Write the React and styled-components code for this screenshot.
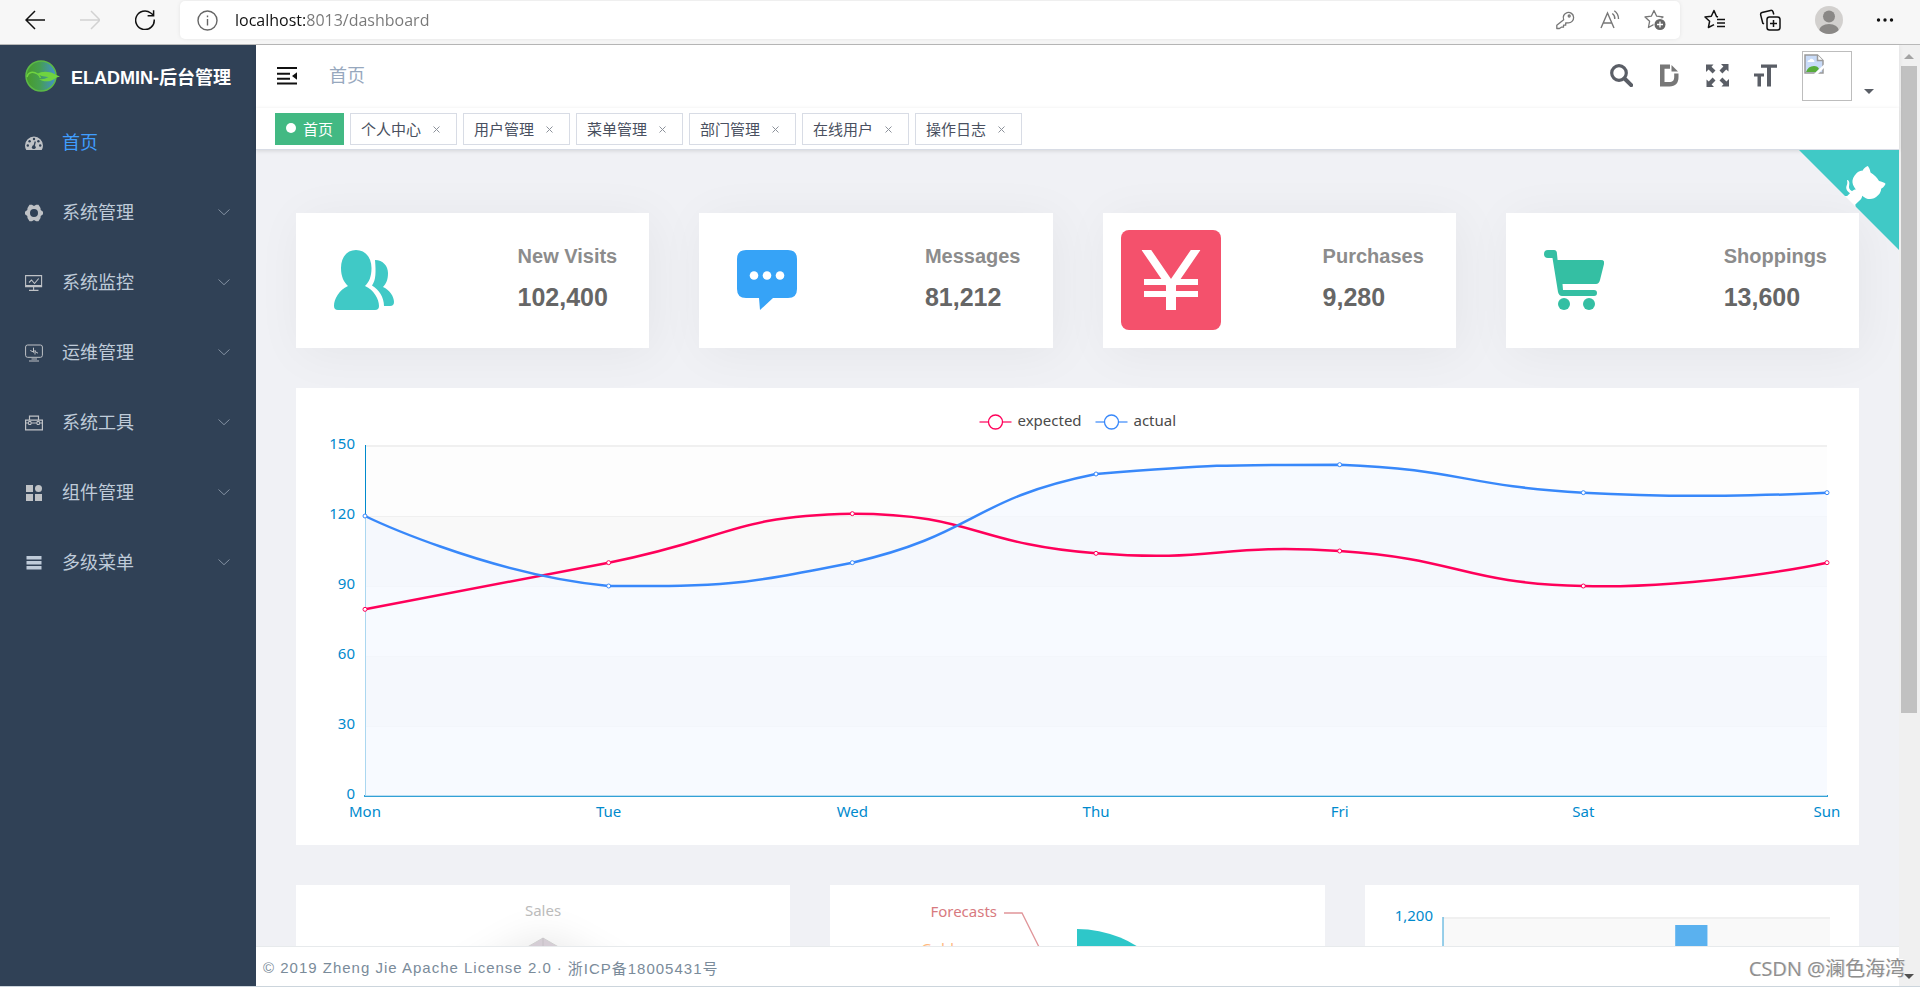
import React, { useLayoutEffect, useRef, useState } from 'react';
import styled, { createGlobalStyle } from 'styled-components';

const SANS = '"Liberation Sans", "Noto Sans CJK SC", sans-serif';
const CHART = '"Noto Sans", "Noto Sans CJK SC", sans-serif';

const Global = createGlobalStyle`
  *, *::before, *::after { box-sizing: border-box; }
  body { margin: 0; font-family: ${SANS}; overflow: hidden; }
  button { border: 0; background: none; padding: 0; margin: 0; font: inherit; color: inherit; cursor: pointer; }
  a { color: inherit; text-decoration: none; }
  svg { display: block; flex: none; }
  ul, p { margin: 0; padding: 0; list-style: none; }
`;

/* ---------- page frame ---------- */

const Page = styled.div`
  height: 100vh;
  display: flex;
  flex-direction: column;
  position: relative;
  border-bottom: 1px solid #ccd5dc;
`;

const Body = styled.div`
  flex: 1;
  min-height: 0;
  display: flex;
`;

const Column = styled.div`
  flex: 1;
  min-width: 0;
  display: flex;
  flex-direction: column;
  background: #f0f1f5;
`;

/* ---------- browser bar ---------- */

const BrowserBar = styled.header`
  height: 45px;
  flex: none;
  display: flex;
  align-items: flex-start;
  background: #f7f7f7;
  border-bottom: 1px solid #b9b9b9;
`;

const NavButtons = styled.div`
  width: 180px;
  height: 40px;
  padding-left: 25px;
  display: flex;
  align-items: center;
  gap: 35px;
`;

const AddressBar = styled.div`
  flex: 1;
  height: 38px;
  margin-top: 1px;
  padding: 0 14px 0 17px;
  display: flex;
  align-items: center;
  background: #fff;
  border-radius: 5px;
  box-shadow: 0 0 4px rgba(0, 0, 0, 0.08);
`;

const AddressInput = styled.input`
  flex: 1;
  min-width: 0;
  height: 30px;
  margin-left: 17px;
  padding: 0;
  border: 0;
  outline: 0;
  font: 16px "Open Sans", sans-serif;
  color: transparent;
  background: linear-gradient(to right, #111 70px, #777 70px);
  -webkit-background-clip: text;
  background-clip: text;
`;

const AddressActions = styled.div`
  display: flex;
  gap: 23px;
`;

const BrowserActions = styled.div`
  width: 240px;
  height: 40px;
  padding: 0 26px 0 24px;
  display: flex;
  align-items: center;
  justify-content: space-between;
`;

/* ---------- sidebar ---------- */

const Sidebar = styled.nav`
  width: 256px;
  flex: none;
  background: #304156;
`;

const Logo = styled.a`
  height: 63px;
  padding-bottom: 2px;
  display: flex;
  align-items: center;
  justify-content: center;
  gap: 10px;
  font-size: 18px;
  font-weight: 700;
  color: #fff;
`;

const MenuItem = styled.button`
  width: 100%;
  height: 70px;
  padding: 0 26px 0 25px;
  display: flex;
  align-items: center;
  text-align: left;
  font-size: 18px;
  line-height: 24px;
  color: ${(p) => (p.$active ? '#409eff' : '#bfcbd9')};
`;

const MenuLabel = styled.span`
  flex: 1;
  margin-left: 19px;
`;

/* ---------- top navigation ---------- */

const Navbar = styled.div`
  height: 63px;
  flex: none;
  padding: 0 25px 2px 19px;
  display: flex;
  align-items: center;
  background: #fff;
  box-shadow: 0 1px 5px rgba(0, 21, 41, 0.08);
  position: relative;
`;

const Crumb = styled.a`
  flex: 1;
  margin-left: 30px;
  font-size: 18px;
  line-height: 24px;
  color: #97a8be;
`;

const NavTools = styled.div`
  display: flex;
  align-items: center;
  gap: 25px;
  color: #5a5e66;
`;

const UserMenu = styled.button`
  display: flex;
  align-items: flex-end;
  gap: 12px;
  padding-top: 1px;
`;

const Avatar = styled.span`
  width: 50px;
  height: 50px;
  padding: 2px 0 0 1px;
  border: 1px solid #bdbdbd;
`;

const Caret = styled.span`
  margin-bottom: 7px;
  border: 5px solid transparent;
  border-top-color: #5a5e66;
  border-bottom: 0;
`;

const Tags = styled.div`
  height: 42px;
  flex: none;
  padding: 5px 19px 0;
  display: flex;
  gap: 6px;
  background: #fff;
  border-bottom: 1px solid #d8dce5;
  box-shadow: 0 1px 4px rgba(0, 0, 0, 0.12);
  position: relative;
`;

const Tag = styled.div`
  height: 32px;
  padding: 0 10px 2px;
  display: flex;
  align-items: center;
  gap: ${(p) => (p.$active ? 7 : 5)}px;
  font-size: 15px;
  color: ${(p) => (p.$active ? '#fff' : '#495060')};
  background: ${(p) => (p.$active ? '#42b983' : '#fff')};
  border: 1px solid ${(p) => (p.$active ? '#42b983' : '#d8dce5')};
`;

const Dot = styled.span`
  width: 10px;
  height: 10px;
  border-radius: 50%;
  background: #fff;
`;

const CloseButton = styled.button`
  width: 20px;
  height: 20px;
  padding-top: 2px;
  display: grid;
  place-items: center;
  color: #8d929b;
`;

/* ---------- dashboard ---------- */

const Dashboard = styled.main`
  flex: 1;
  min-height: 0;
  overflow: hidden;
  position: relative;
  padding: 63px 40px 0;
`;

const Corner = styled.a`
  position: absolute;
  top: 0;
  right: 0;
  color: #fff;
`;

const StatGrid = styled.div`
  display: grid;
  grid-template-columns: repeat(4, 1fr);
  gap: 50px;
  margin-bottom: 40px;
`;

const StatCard = styled.section`
  height: 135px;
  display: flex;
  justify-content: space-between;
  background: #fff;
  box-shadow: 5px 5px 50px rgba(0, 0, 0, 0.05);
`;

const StatIcon = styled.span`
  width: 100px;
  height: 100px;
  margin: 17px 0 0 18px;
  padding: 20px;
  border-radius: 8px;
  color: ${(p) => (p.$filled ? '#fff' : p.$color)};
  background: ${(p) => (p.$filled ? p.$color : 'transparent')};
`;

const StatText = styled.div`
  margin: 32px 32px 0 0;
  font-weight: 700;
`;

const StatLabel = styled.p`
  margin-bottom: 15px;
  font-size: 20px;
  line-height: 22px;
  color: #8c8c8c;
`;

const StatValue = styled.p`
  font-size: 25px;
  line-height: 30px;
  color: #666;
`;

const ChartPanel = styled.section`
  height: ${(p) => p.$height}px;
  margin-bottom: 40px;
  background: #fff;

  svg { width: 100%; height: 100%; font: 15px ${CHART}; }
`;

const ChartGrid = styled.div`
  display: grid;
  grid-template-columns: repeat(3, 1fr);
  gap: 40px;
`;

const Footer = styled.footer`
  height: 40px;
  flex: none;
  padding: 2px 7px 0;
  display: flex;
  align-items: center;
  gap: 5px;
  background: #fff;
  border-top: 1px solid #e7eaec;
  font-size: 15px;
  letter-spacing: 1px;
  color: #7a8b9a;
  position: relative;
`;

const ScrollTrack = styled.div`
  width: 21px;
  flex: none;
  padding: 0 3px 0 2px;
  display: flex;
  flex-direction: column;
  align-items: center;
  background: #f0f0f0;
`;

const ScrollArrow = styled.button`
  height: 21px;
  display: grid;
  place-items: center;
  color: ${(p) => (p.$end ? '#505050' : '#a3a3a3')};
`;

const ScrollRail = styled.div`
  flex: 1;
  width: 100%;
`;

const ScrollThumb = styled.div`
  height: 72%;
  background: #c1c1c1;
`;

const Watermark = styled.span`
  position: absolute;
  right: 15px;
  bottom: 4px;
  font: 20px/26px "Open Sans", "Noto Sans CJK SC", sans-serif;
  color: #8f8f8f;
  text-shadow: -1px -1px 0 #fff, 1px 0 0 #ddd;
`;

/* ---------- icons ---------- */

function Icon({ size = 20, box = 20, children, ...rest }) {
  return (
    <svg width={size} height={size} viewBox={`0 0 ${box} ${box}`} fill="none" aria-hidden="true" {...rest}>
      {children}
    </svg>
  );
}

const BackIcon = () => (
  <Icon stroke="#111" strokeWidth="1.5"><path d="M20 10H1M10 1 1 10l9 9" /></Icon>
);
const ForwardIcon = () => (
  <Icon stroke="#d2d2d2" strokeWidth="1.5"><path d="M0 10h19M11 1l9 9-9 9" /></Icon>
);
const ReloadIcon = () => (
  <Icon stroke="#111" strokeWidth="1.5"><path d="M19.2 9.5A9.3 9.3 0 1 1 15.7 3l2.6 2M18.6.2v5.6h-6" /></Icon>
);
const InfoIcon = () => (
  <Icon size={21} box={21} stroke="#666" strokeWidth="1.4">
    <circle cx="10.5" cy="10.5" r="9.5" /><path d="M10.5 9v6.5M10.5 5.500v1.700" />
  </Icon>
);
const KeyIcon = () => (
  <Icon size={22} box={22} stroke="#777" strokeWidth="1.3">
    <path d="M9.7 10.8a5.2 5.2 0 1 1 4.2 3l-2.2.2v2.200H9.500v2H7.300L5.500 19.500H2.800v-3.200l6.900-5.500Z" strokeLinejoin="round" />
    <circle cx="15.2" cy="7" r="1" />
  </Icon>
);
const ReadAloudIcon = () => (
  <Icon size={22} box={22} stroke="#777" strokeWidth="1.4">
    <path d="M2 19 8.500 4 15 19M4.200 14h8.600M13.300 4.500a6 6 0 0 1 2.500 5.500M15.300 1.800a10 10 0 0 1 4.200 8.200" />
  </Icon>
);
const STAR = 'M10 1.500l2.700 5.700 6.300.8-4.600 4.300 1.200 6.200L10 15.400l-5.600 3.100 1.200-6.200L1 8l6.300-.8Z';
const StarAddIcon = () => (
  <Icon size={22} box={22} stroke="#777" strokeWidth="1.3">
    <path d={STAR} strokeLinejoin="round" />
    <circle cx="16" cy="15.5" r="6.5" fill="#fff" stroke="none" />
    <circle cx="16" cy="15.5" r="5.5" fill="#666" stroke="none" />
    <path d="M16 12.500v6M13 15.500h6" stroke="#fff" />
  </Icon>
);
const FavoritesIcon = () => (
  <Icon size={22} box={22} stroke="#111" strokeWidth="1.5">
    <path d="M14 8l-1.500-.5L10 1.500 7.300 7.200 1 8l4.600 4.300-1.200 6.200L10 15.600M13 10.500h8M13 14h8M13 17.500h8" strokeLinejoin="round" />
  </Icon>
);
const CollectionsIcon = () => (
  <Icon size={22} box={22} stroke="#111" strokeWidth="1.5">
    <rect x="8" y="8" width="13" height="13" rx="2.5" />
    <path d="M14.500 11v7M11 14.500h7M5 15 3.800 14.200 1.600 5.600Q1.300 4 3 3.500L11.500 1.400q2-.3 2.500 1.400l.8 2.700" />
  </Icon>
);
const ProfileIcon = () => (
  <Icon size={28} box={28}>
    <defs><clipPath id="profile"><circle cx="14" cy="14" r="14" /></clipPath></defs>
    <g clipPath="url(#profile)">
      <rect width="28" height="28" fill="#d2d0ce" />
      <circle cx="14" cy="10.5" r="6" fill="#8a8886" />
      <ellipse cx="14" cy="25" rx="10" ry="7" fill="#8a8886" />
    </g>
  </Icon>
);
const MoreIcon = () => (
  <Icon size={18} box={18} fill="#111">
    <circle cx="2.5" cy="9" r="1.7" /><circle cx="9" cy="9" r="1.7" /><circle cx="15.5" cy="9" r="1.7" />
  </Icon>
);

const LogoIcon = () => (
  <svg width="36" height="34" viewBox="0 0 36 34" aria-hidden="true">
    <defs>
      <linearGradient id="leaf">
        <stop offset="0" stopColor="#479a2a" /><stop offset=".45" stopColor="#459f50" /><stop offset="1" stopColor="#438fd0" />
      </linearGradient>
    </defs>
    <circle cx="16" cy="17" r="15" fill="url(#leaf)" stroke="#5cb946" strokeWidth="1.5" />
    <path d="M12 15C17 11.500 25 12.500 28.500 14.500q3.500 2 6.500 3-3.500.5-6.500 3C24 23.500 17 22.500 14 20q5 .8 9.500-2-6 .2-11.500-3Z" fill="#6fd340" />
    <path d="M2 18C3 13 8 12 12.500 15q2 1.500 3 4" stroke="#6fd340" strokeWidth="1.5" fill="none" />
  </svg>
);

const ICON_FILL = '#bfc2c6';
const MENU_ICONS = {
  dashboard: (
    <>
      <path d="M9 2.500A9 9 0 0 0 0 11.500q0 2.500 1.300 4.500h15.400Q18 14 18 11.500a9 9 0 0 0-9-9Z" fill={ICON_FILL} />
      <g fill="#304156">
        <circle cx="2.800" cy="11.500" r="1.200" /><circle cx="4.600" cy="7.200" r="1.200" /><circle cx="9" cy="5" r="1.200" />
        <circle cx="13.400" cy="7.200" r="1.200" /><circle cx="15.200" cy="11.500" r="1.200" /><circle cx="8.800" cy="13.200" r="1.900" />
      </g>
      <path d="M8.800 13 10.300 7.500" stroke="#304156" strokeWidth="1.300" />
    </>
  ),
  gear: (
    <path
      fillRule="evenodd"
      fill={ICON_FILL}
      d="M4.500.8h2.400L9 2l2.100-1.200h2.400l2 3.200.2 2L18 7.800v2.400L15.700 12l-.2 2-2 3.200h-2.400L9 16l-2.100 1.200H4.500l-2-3.200-.2-2L0 10.200V7.800L2.300 6l.2-2ZM9 5a4 4 0 1 0 0 8 4 4 0 0 0 0-8Z"
    />
  ),
  monitor: (
    <path d="M.6 1.600h16v11H.6ZM.6 11.500h16M8.600 12.500v4M4 16.400h9.500M4 8.500l2.500-2.500 3 3.500 4.200-5" stroke={ICON_FILL} strokeWidth="1.100" />
  ),
  ops: (
    <>
      <rect x=".6" y="1" width="16.800" height="12.300" rx="2" stroke={ICON_FILL} />
      <path d="M8.500 3.700V8.500M5.300 6.500 8.500 8M10 6v4.500M10 7.500l3 1.700M6.500 15h5.500M4 17h10" stroke={ICON_FILL} />
    </>
  ),
  tools: (
    <>
      <path d="M.6 6.200h16.800v9.700H.6ZM4.500 6V2.200h9V6M.6 9h3M6 9h6M14.400 9h3" stroke={ICON_FILL} strokeWidth="1.200" />
      <path d="M3.600 7.500H6v3H3.600ZM12 7.500h2.400v3H12Z" stroke={ICON_FILL} />
    </>
  ),
  blocks: (
    <g fill={ICON_FILL}>
      <path d="M1 1h7v7H1ZM1 10h7v7H1ZM10 10h7v7h-7Z" /><circle cx="13.500" cy="4.500" r="3.500" />
    </g>
  ),
  list: <path d="M1.500 2h15v3.400h-15ZM1.500 7h15v3.400h-15ZM1.500 12h15v3.400h-15Z" fill="#bfcbd9" />,
};

const ChevronIcon = () => (
  <Icon size={12} box={12} stroke="#8391a2" strokeWidth="1"><path d="M.5 2.500 6 7.700 11.500 2.500" /></Icon>
);
const FoldIcon = () => (
  <Icon size={24} box={24} fill="#111">
    <path d="M2 3h20v2H2ZM2 8.700h13v2H2ZM2 13.700h13v2H2ZM2 18.500h20v2H2ZM22 8.200v7.600l-5-3.800Z" />
  </Icon>
);
const SearchIcon = () => (
  <Icon size={23} box={23} stroke="currentColor">
    <circle cx="9" cy="9" r="7.300" strokeWidth="3.200" /><path d="m14.500 14.500 6.700 6.700" strokeWidth="4" strokeLinecap="round" />
  </Icon>
);
const DocIcon = () => (
  <Icon size={23} box={23} fill="#777">
    <path d="M2 .5h10v4.200H6.500V18H11c4 0 5.200-2 5.200-5V9.500H20.500V13c0 6-3 9.500-9 9.500H2Z" />
    <path d="M13.500 1 20 7.500h-6.500Z" />
  </Icon>
);
const FullscreenIcon = () => (
  <Icon size={23} box={23} fill="currentColor">
    {[0, 90, 180, 270].map((r) => (
      <path key={r} transform={`rotate(${r} 11.500 11.500)`} d="M0 .5h7.500L5.500 2.800 9.500 6.600 6.600 9.500 2.600 5.600 0 8Z" />
    ))}
  </Icon>
);
const SizeIcon = () => (
  <Icon size={23} box={23} fill="currentColor">
    <path d="M7 .5h16v3.300h-6V22.500h-4V3.800H7ZM0 9.500h10v3H7v10H3.500v-10H0Z" />
  </Icon>
);
const BrokenImageIcon = () => (
  <Icon>
    <path d="M1 1h12.500L19 6.500V19H1Z" fill="#c8dbf8" stroke="#9a9a9a" strokeWidth="1.500" />
    <path d="M3.500 8q0-2 2-2 1-2 3-1t2 3Z" fill="#fff" />
    <path d="M2 18q2-6 8-6 4 0 5 3l-3 3Z" fill="#58ad3b" />
    <path d="M13.500 1v5.500H19" fill="#fff" stroke="#9a9a9a" strokeWidth="1.500" />
    <path d="M10 20 20 10.500V14L14 20Z" fill="#fff" />
  </Icon>
);
const CloseIcon = () => (
  <Icon size={7} box={7} stroke="currentColor"><path d="m.5.5 6 6M6.500.5l-6 6" /></Icon>
);

const STAT_ICONS = {
  people: (
    <>
      <path d="M22 0C31 0 37.500 7 37.500 18c0 9-2.500 14-6.500 18 9 4 14 13 14 20q0 4-4 4H4q-4 0-4-4c0-7 5-16 14-20-4-4-7-9-7-18C7 7 13 0 22 0Z" />
      <path d="M41 10c8 0 13 6 13 13 0 7-2 11-5 14 7 3 11 10 11 15q0 4-4 4h-6C50 47 45 40 38 35.500 42 30 42 22 41 10Z" />
    </>
  ),
  message: (
    <>
      <path d="M9 0h42q9 0 9 9v30q0 9-9 9H36L23 60l-1-12H9q-9 0-9-9V9Q0 0 9 0Z" />
      <g fill="#fff"><circle cx="17" cy="25.500" r="4.300" /><circle cx="30" cy="25.500" r="4.300" /><circle cx="43" cy="25.500" r="4.300" /></g>
    </>
  ),
  money: (
    <g fill="none" stroke="currentColor" clipPath="url(#moneyBox)">
      <path d="M4 -2 30 36 56 -2" strokeWidth="8" />
      <path d="M30 32V60" strokeWidth="10" />
      <path d="M3 32H57M3 44H57" strokeWidth="6" />
    </g>
  ),
  cart: (
    <>
      <path d="M4 0h6q3 0 3 4l.6 6H57q4 0 3 4l-4 16q-1 4-4 4H18.500l.5 6H50q3 0 3 3t-3 3H18q-3 0-4-4L8.500 8H4Q0 8 0 4t4-4Z" />
      <circle cx="20" cy="54" r="6" /><circle cx="45" cy="54" r="6" />
    </>
  ),
};

/* ---------- charts ---------- */

const AXIS = '#008acd';
const DAYS = ['Mon', 'Tue', 'Wed', 'Thu', 'Fri', 'Sat', 'Sun'];
const SERIES = [
  { name: 'expected', color: '#ff005a', data: [80, 100, 121, 104, 105, 90, 100] },
  { name: 'actual', color: '#3888fa', data: [120, 90, 100, 138, 142, 130, 130], area: true },
];

function useWidth() {
  const ref = useRef(null);
  const [width, setWidth] = useState(0);
  useLayoutEffect(() => {
    const el = ref.current;
    const measure = () => setWidth(el.clientWidth);
    measure();
    const observer = new ResizeObserver(measure);
    observer.observe(el);
    return () => observer.disconnect();
  }, []);
  return [ref, width];
}

// Smooth path whose control points stay inside the bounding box of the data.
function smoothPath(points) {
  const xs = points.map((p) => p[0]);
  const ys = points.map((p) => p[1]);
  const clamp = ([x, y]) => [
    Math.min(Math.max(x, Math.min(...xs)), Math.max(...xs)),
    Math.min(Math.max(y, Math.min(...ys)), Math.max(...ys)),
  ];
  let d = `M${points[0]}`;
  let cp0 = points[0];
  for (let i = 1; i < points.length; i += 1) {
    const prev = points[i - 1];
    const p = points[i];
    const next = points[i + 1];
    let cp1 = p;
    let following = p;
    if (next) {
      const v = [next[0] - prev[0], next[1] - prev[1]];
      const a = Math.hypot(p[0] - prev[0], p[1] - prev[1]);
      const b = Math.hypot(next[0] - p[0], next[1] - p[1]);
      const ratio = b / (a + b);
      cp1 = [p[0] - v[0] * 0.5 * (1 - ratio), p[1] - v[1] * 0.5 * (1 - ratio)];
      following = [p[0] + v[0] * 0.5 * ratio, p[1] + v[1] * 0.5 * ratio];
    }
    d += `C${clamp(cp0)} ${clamp(cp1)} ${p}`;
    cp0 = following;
  }
  return d;
}

function LineChart() {
  const [ref, width] = useWidth();
  const left = 69;
  const right = width - 32;
  const top = 58;
  const bottom = 408;
  const x = (i) => left + ((right - left) * i) / 6;
  const y = (v) => bottom - ((bottom - top) * v) / 150;
  const mid = width / 2;
  return (
    <ChartPanel $height={457} ref={ref} aria-label="Weekly visits">
      {width > 0 && (
        <svg>
          {[30, 60, 90, 120, 150].map((v, i) => (
            <g key={v}>
              <rect x={left} y={y(v)} width={right - left} height="70" fill={i % 2 ? '#f9f9f9' : '#fdfdfd'} />
              <path d={`M${left} ${y(v)}H${right}`} stroke="#f0f0f0" strokeWidth="2" />
            </g>
          ))}
          {[0, 30, 60, 90, 120, 150].map((v) => (
            <text key={v} x={left - 10} y={y(v) + 3} textAnchor="end" fill={AXIS}>{v}</text>
          ))}
          {DAYS.map((d, i) => (
            <text key={d} x={x(i)} y={bottom + 21} textAnchor="middle" fill={AXIS}>{d}</text>
          ))}
          <path d={`M${left} ${top - 1}V${bottom}`} stroke={AXIS} strokeWidth="1" shapeRendering="crispEdges" />
          <path d={`M${left - 1} ${bottom}H${right + 1}`} stroke={AXIS} strokeWidth="2" opacity=".8" />
          {SERIES.filter((s) => s.area).map((s) => (
            <path
              key={s.name}
              d={`${smoothPath(s.data.map((v, i) => [x(i), y(v)]))}V${bottom}H${left}Z`}
              fill="#f3f8ff"
              opacity=".7"
            />
          ))}
          {SERIES.map((s) => {
            const pts = s.data.map((v, i) => [x(i), y(v)]);
            return (
              <g key={s.name} stroke={s.color}>
                <path d={smoothPath(pts)} fill="none" strokeWidth="2.500" />
                {pts.map(([cx, cy]) => <circle key={cx} cx={cx} cy={cy} r="2" fill="#fff" />)}
              </g>
            );
          })}
          {SERIES.map((s, i) => {
            const start = mid - 98 + i * 116;
            return (
              <g key={s.name}>
                <path d={`M${start} 34h32`} stroke={s.color} strokeWidth="1.500" opacity=".8" />
                <circle cx={start + 16} cy="34" r="7" fill="#fff" stroke={s.color} strokeWidth="1.300" />
                <text x={start + 38} y="38" fill="#4a4a4a">{s.name}</text>
              </g>
            );
          })}
        </svg>
      )}
    </ChartPanel>
  );
}

function RadarChart() {
  const [ref, width] = useWidth();
  const cx = width / 2;
  const cy = 157;
  const r = 104;
  const corners = [0, 1, 2, 3, 4, 5].map((i) => {
    const a = (i * Math.PI) / 3 - Math.PI / 2;
    return [cx + r * Math.cos(a), cy + r * Math.sin(a)];
  });
  return (
    <ChartPanel $height={375} ref={ref} aria-label="Radar">
      {width > 0 && (
        <svg>
          <defs>
            <filter id="glow" x="-50%" y="-50%" width="200%" height="200%"><feGaussianBlur stdDeviation="22" /></filter>
          </defs>
          <polygon points={corners.join(' ')} fill="#000" opacity=".11" filter="url(#glow)" />
          <polygon points={corners.join(' ')} fill="#d5cdd5" stroke="#cfcfcf" />
          {corners.map((c) => <path key={c} d={`M${cx} ${cy}L${c}`} stroke="#c5c0c5" />)}
          <text x={cx} y="31" textAnchor="middle" fill="#bbb">Sales</text>
        </svg>
      )}
    </ChartPanel>
  );
}

function PieChart() {
  const [ref, width] = useWidth();
  const cx = width / 2;
  return (
    <ChartPanel $height={375} ref={ref} aria-label="Forecast split">
      {width > 0 && (
        <svg>
          <path d={`M${cx} 157V44A113 113 0 0 1 ${cx + 113} 157Z`} fill="#2ec7c9" />
          <path d={`M${cx - 73} 28h18l20 40`} fill="none" stroke="#d87a80" opacity=".8" strokeWidth="1.300" />
          <text x={cx - 80} y="32" textAnchor="end" fill="#d87a80">Forecasts</text>
          <text x={cx - 123} y="69" textAnchor="end" fill="#ffb980">Gold</text>
        </svg>
      )}
    </ChartPanel>
  );
}

function BarChart() {
  const [ref, width] = useWidth();
  const right = width - 29;
  return (
    <ChartPanel $height={375} ref={ref} aria-label="Page views">
      {width > 0 && (
        <svg>
          <rect x="78" y="33" width={right - 78} height="60" fill="#f9f9f9" />
          <path d={`M78 33H${right}`} stroke="#f0f0f0" strokeWidth="2" />
          <path d="M78 32V340" stroke={AXIS} opacity=".8" />
          <rect x={78 + (right - 78) * 0.6} y="40" width={(right - 78) / 12} height="300" fill="#5ab1ef" />
          <text x="68" y="36" textAnchor="end" fill={AXIS}>1,200</text>
        </svg>
      )}
    </ChartPanel>
  );
}

/* ---------- data ---------- */

const MENU = [
  ['首页', 'dashboard'],
  ['系统管理', 'gear'],
  ['系统监控', 'monitor'],
  ['运维管理', 'ops'],
  ['系统工具', 'tools'],
  ['组件管理', 'blocks'],
  ['多级菜单', 'list'],
];
const TAGS = ['首页', '个人中心', '用户管理', '菜单管理', '部门管理', '在线用户', '操作日志'];
const STATS = [
  { label: 'New Visits', value: '102,400', icon: 'people', color: '#40c9c6' },
  { label: 'Messages', value: '81,212', icon: 'message', color: '#36a3f7' },
  { label: 'Purchases', value: '9,280', icon: 'money', color: '#f4516c', filled: true },
  { label: 'Shoppings', value: '13,600', icon: 'cart', color: '#34bfa3' },
];

function GithubCorner() {
  return (
    <Corner href="#github" aria-label="GitHub">
      <svg width="100" height="100" viewBox="0 0 250 250">
        <path d="M0,0 L115,115 L130,115 L142,142 L250,250 L250,0 Z" fill="#40c9c6" />
        <path fill="currentColor" d="M128.3,109.0 C113.8,99.7 119.0,89.6 119.0,89.6 C122.0,82.7 120.5,78.6 120.5,78.6 C119.2,72.0 123.4,76.3 123.4,76.3 C127.3,80.9 125.5,87.3 125.5,87.3 C122.9,97.6 130.6,101.9 134.4,103.2" />
        <path fill="currentColor" d="M115.0,115.0 C114.9,115.1 118.7,116.5 119.8,115.4 L133.7,101.6 C136.9,99.2 139.9,98.4 142.2,98.6 C133.8,88.0 127.5,74.4 143.8,58.0 C148.5,53.4 154.0,51.2 159.7,51.0 C160.3,49.4 163.2,43.6 171.4,40.1 C171.4,40.1 176.1,42.5 178.8,56.2 C183.1,58.6 187.2,61.8 190.9,65.4 C194.5,69.0 197.7,73.2 200.1,77.6 C213.8,80.2 216.3,84.9 216.3,84.9 C212.7,93.1 206.9,96.0 205.4,96.6 C205.1,102.4 203.0,107.8 198.3,112.5 C181.9,128.9 168.3,122.5 157.7,114.1 C157.9,116.9 156.7,120.9 152.7,124.9 L141.0,136.5 C139.8,137.7 141.6,141.9 141.8,141.8 Z" />
      </svg>
    </Corner>
  );
}

export default function App() {
  return (
    <Page>
      <Global />
      <BrowserBar>
        <NavButtons>
          <button aria-label="Back"><BackIcon /></button>
          <button aria-label="Forward"><ForwardIcon /></button>
          <button aria-label="Refresh"><ReloadIcon /></button>
        </NavButtons>
        <AddressBar>
          <button aria-label="Site information"><InfoIcon /></button>
          <AddressInput aria-label="Address" defaultValue="localhost:8013/dashboard" spellCheck={false} />
          <AddressActions>
            <button aria-label="Passwords"><KeyIcon /></button>
            <button aria-label="Read aloud"><ReadAloudIcon /></button>
            <button aria-label="Add to favorites"><StarAddIcon /></button>
          </AddressActions>
        </AddressBar>
        <BrowserActions>
          <button aria-label="Favorites"><FavoritesIcon /></button>
          <button aria-label="Collections"><CollectionsIcon /></button>
          <button aria-label="Profile"><ProfileIcon /></button>
          <button aria-label="More"><MoreIcon /></button>
        </BrowserActions>
      </BrowserBar>

      <Body>
        <Sidebar>
          <Logo href="#home"><LogoIcon />ELADMIN-后台管理</Logo>
          {MENU.map(([label, icon], i) => (
            <MenuItem key={label} $active={i === 0}>
              <Icon size={18} box={18}>{MENU_ICONS[icon]}</Icon>
              <MenuLabel>{label}</MenuLabel>
              {i > 0 && <ChevronIcon />}
            </MenuItem>
          ))}
        </Sidebar>

        <Column>
          <Navbar>
            <button aria-label="Collapse menu"><FoldIcon /></button>
            <Crumb href="#home">首页</Crumb>
            <NavTools>
              <button aria-label="Search"><SearchIcon /></button>
              <button aria-label="Documents"><DocIcon /></button>
              <button aria-label="Full screen"><FullscreenIcon /></button>
              <button aria-label="Text size"><SizeIcon /></button>
              <UserMenu aria-label="User menu">
                <Avatar><BrokenImageIcon /></Avatar>
                <Caret />
              </UserMenu>
            </NavTools>
          </Navbar>
          <Tags>
            {TAGS.map((label, i) => (
              <Tag key={label} $active={i === 0}>
                {i === 0 && <Dot />}
                <a href={`#${label}`}>{label}</a>
                {i > 0 && <CloseButton aria-label={`关闭${label}`}><CloseIcon /></CloseButton>}
              </Tag>
            ))}
          </Tags>
          <Dashboard>
            <StatGrid>
              {STATS.map((s) => (
                <StatCard key={s.label}>
                  <StatIcon $color={s.color} $filled={s.filled}>
                    <Icon size={60} box={60} fill="currentColor">
                      <defs><clipPath id="moneyBox"><rect width="60" height="60" /></clipPath></defs>
                      {STAT_ICONS[s.icon]}
                    </Icon>
                  </StatIcon>
                  <StatText>
                    <StatLabel>{s.label}</StatLabel>
                    <StatValue>{s.value}</StatValue>
                  </StatText>
                </StatCard>
              ))}
            </StatGrid>
            <LineChart />
            <ChartGrid>
              <RadarChart />
              <PieChart />
              <BarChart />
            </ChartGrid>
            <GithubCorner />
          </Dashboard>
          <Footer>
            <span>© 2019 Zheng Jie Apache License 2.0</span>
            <span>·</span>
            <a href="#icp">浙ICP备18005431号</a>
          </Footer>
        </Column>

        <ScrollTrack>
          <ScrollArrow aria-label="Scroll up">
            <Icon size={10} box={10} fill="currentColor"><path d="M0 8 5 3l5 5Z" /></Icon>
          </ScrollArrow>
          <ScrollRail><ScrollThumb /></ScrollRail>
          <ScrollArrow $end aria-label="Scroll down">
            <Icon size={10} box={10} fill="currentColor"><path d="m0 3 5 5 5-5Z" /></Icon>
          </ScrollArrow>
        </ScrollTrack>
      </Body>
      <Watermark>CSDN @澜色海湾</Watermark>
    </Page>
  );
}
